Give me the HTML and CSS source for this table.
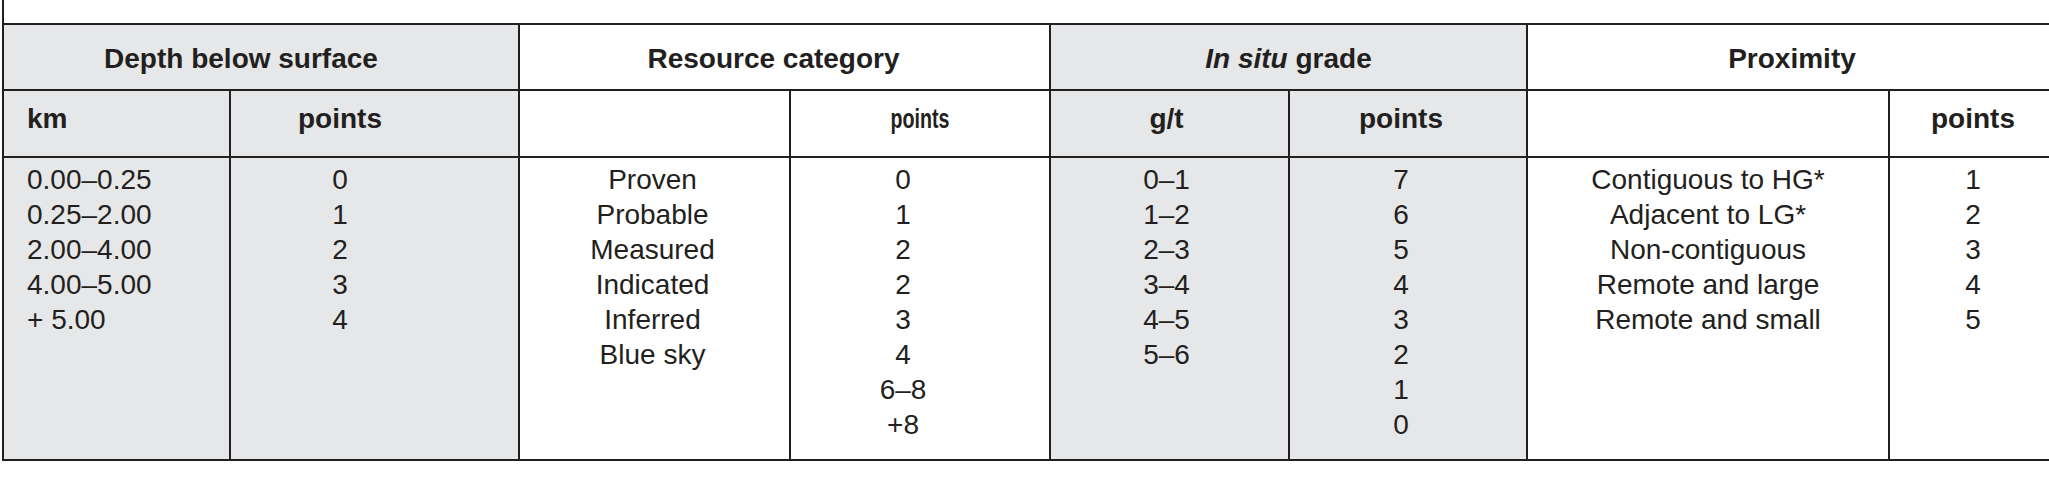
FILE: index.html
```html
<!DOCTYPE html>
<html lang="en">
<head>
<meta charset="utf-8">
<title>Scoring table</title>
<link rel="stylesheet" href="styles.css">
</head>
<body>
<div class="frame">
  <div class="grid">
    <div class="cell head1 gray span2 depth-head">Depth below surface</div>
    <div class="cell head1 span2 res-head">Resource category</div>
    <div class="cell head1 gray span2"><i>In situ</i> grade</div>
    <div class="cell head1 span2">Proximity</div>

    <div class="cell head2 gray left">km</div>
    <div class="cell head2 gray depth-pts">points</div>
    <div class="cell head2"></div>
    <div class="cell head2"><span class="narrow">points</span></div>
    <div class="cell head2 gray gt">g/t</div>
    <div class="cell head2 gray situ-pts">points</div>
    <div class="cell head2"></div>
    <div class="cell head2">points</div>

    <div class="cell body gray left">
      <div>0.00–0.25</div><div>0.25–2.00</div><div>2.00–4.00</div><div>4.00–5.00</div><div>+ 5.00</div>
    </div>
    <div class="cell body gray depth-pts">
      <div>0</div><div>1</div><div>2</div><div>3</div><div>4</div>
    </div>
    <div class="cell body res-name">
      <div>Proven</div><div>Probable</div><div>Measured</div><div>Indicated</div><div>Inferred</div><div>Blue sky</div>
    </div>
    <div class="cell body res-pts">
      <div>0</div><div>1</div><div>2</div><div>2</div><div>3</div><div>4</div><div>6–8</div><div>+8</div>
    </div>
    <div class="cell body gray gt">
      <div>0–1</div><div>1–2</div><div>2–3</div><div>3–4</div><div>4–5</div><div>5–6</div>
    </div>
    <div class="cell body gray situ-pts">
      <div>7</div><div>6</div><div>5</div><div>4</div><div>3</div><div>2</div><div>1</div><div>0</div>
    </div>
    <div class="cell body">
      <div>Contiguous to HG*</div><div>Adjacent to LG*</div><div>Non-contiguous</div><div>Remote and large</div><div>Remote and small</div>
    </div>
    <div class="cell body">
      <div>1</div><div>2</div><div>3</div><div>4</div><div>5</div>
    </div>
  </div>
</div>
</body>
</html>
```

FILE: styles.css
```css
html, body {
  margin: 0;
  padding: 0;
  background: #ffffff;
  overflow: hidden;
}

body {
  font-family: "Liberation Sans", Arial, Helvetica, sans-serif;
  color: #231f20;
}

.frame {
  margin-left: 2px;
  padding-top: 23px;
  border-left: 2px solid #231f20;
  width: 2054px;
}

.grid {
  display: grid;
  grid-template-columns: 227px 289px 271px 260px 239px 238px 362px 168px;
  grid-template-rows: 66px 67px 303px;
  border-top: 2px solid #231f20;
}

.cell {
  box-sizing: border-box;
  border-right: 2px solid #231f20;
  border-bottom: 2px solid #231f20;
  text-align: center;
  font-size: 28px;
  line-height: 35px;
}

.span2 {
  grid-column: span 2;
}

.gray {
  background: #e6e7e8;
}

.head1 {
  font-weight: bold;
  padding-top: 16px;
}

.head2 {
  font-weight: bold;
  padding-top: 10px;
}

.body {
  padding-top: 4px;
}

.left {
  text-align: left;
  padding-left: 23px;
}

.depth-head {
  padding-right: 40px;
}

.res-head {
  padding-right: 22px;
}

.depth-pts {
  padding-right: 69px;
}

.res-pts {
  padding-right: 34px;
}

.gt {
  padding-right: 6px;
}

.situ-pts {
  padding-right: 14px;
}

.res-name {
  padding-right: 4px;
}

.narrow {
  display: inline-block;
  transform: scaleX(0.7);
}
```
